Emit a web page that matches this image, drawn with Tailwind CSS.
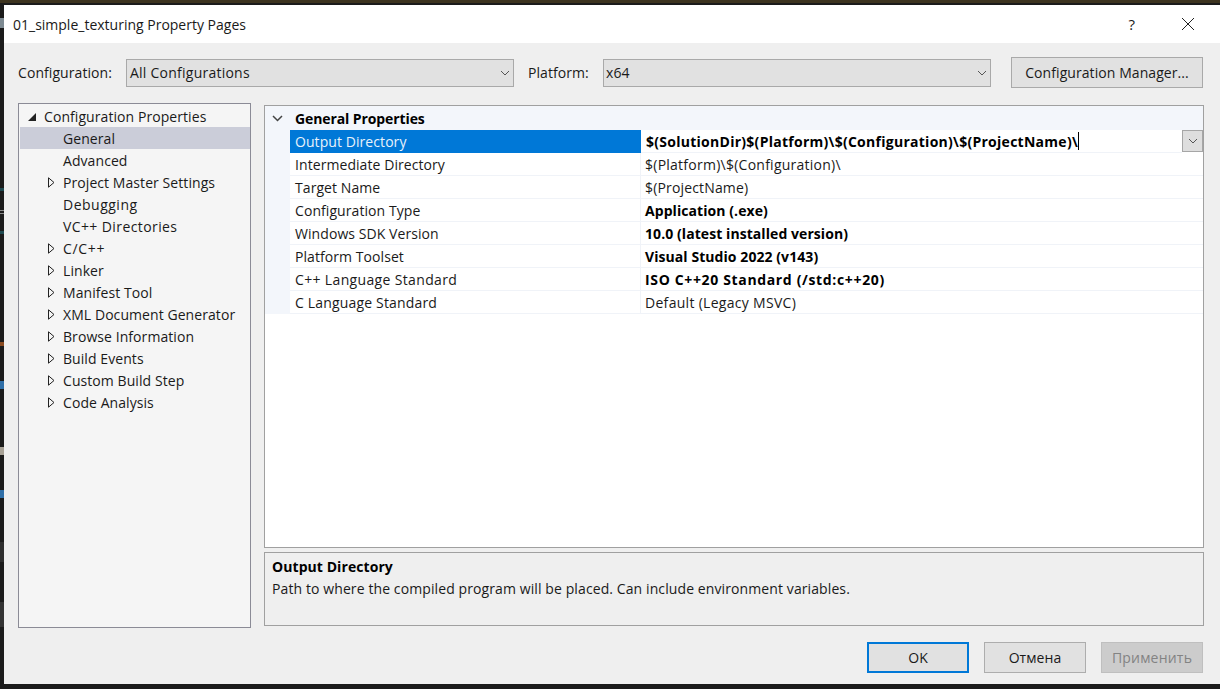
<!DOCTYPE html>
<html lang="en">
  <head>
    <meta charset="UTF-8" />
    <script src="https://cdn.jsdelivr.net/npm/@tailwindcss/browser@4"></script>
    <title>01_simple_texturing Property Pages</title>
  </head>
  <body class="relative h-[689px] w-[1220px] overflow-hidden bg-[#1b1b1b] font-['Open_Sans',sans-serif] text-[14px] tracking-[0.07px] text-[#1a1a1a]">
    <div class="h-[3px] bg-[#3d3420]"></div>

    <!-- bits of the editor behind the dialog -->
    <div class="absolute left-0 top-[18px] h-[10px] w-1 bg-[#7d8a92]"></div>
    <div class="absolute left-0 top-[188px] h-[3px] w-1 bg-[#1f4a50]"></div>
    <div class="absolute left-0 top-[210px] h-px w-1 bg-[#8a8a8a]"></div>
    <div class="absolute left-0 top-[213px] h-px w-1 bg-[#8a8a8a]"></div>
    <div class="absolute left-0 top-[231px] h-[3px] w-1 bg-[#1f4a50]"></div>
    <div class="absolute left-0 top-[342px] h-[4px] w-1 bg-[#8a4a20]"></div>
    <div class="absolute left-0 top-[381px] h-[8px] w-1 bg-[#2f6fa8]"></div>
    <div class="absolute left-0 top-[447px] h-[8px] w-1 bg-[#a8a296]"></div>
    <div class="absolute left-0 top-[490px] h-[8px] w-1 bg-[#2f6fa8]"></div>
    <div class="absolute left-0 top-[542px] h-[20px] w-1 bg-[#2e2e2e]"></div>
    <div class="absolute left-0 top-[602px] h-[25px] w-1 bg-[#333333]"></div>

    <div class="ml-1 mt-0.5 flex h-[679px] w-[1216px] flex-col bg-[#efefef]">
      <!-- title bar -->
      <div class="flex h-[38px] shrink-0 items-center bg-white pl-[9px]">
        <span class="flex-1 tracking-normal">01_simple_texturing Property Pages</span>
        <span class="mr-[46px] text-[15px]">?</span>
        <svg class="mr-[25px] size-[14px]" viewBox="0 0 14 14" fill="none" stroke="#222" stroke-width="1">
          <path d="M1 1l12 12M13 1L1 13" />
        </svg>
      </div>

      <!-- configuration row -->
      <div class="mt-[14px] flex h-[31px] shrink-0 items-center pl-[14px]">
        <span class="w-[108px]">Configuration:</span>
        <div class="flex h-[28px] w-[388px] items-center justify-between border border-[#a9a9a9] bg-[#e1e1e1] pl-[3px] pr-[3px] tracking-[0.24px]">
          All Configurations
          <svg class="size-[10px]" viewBox="0 0 10 10" fill="none" stroke="#555"><path d="M1 3l4 4 4-4" /></svg>
        </div>
        <span class="ml-[14px] w-[75px]">Platform:</span>
        <div class="flex h-[28px] w-[388px] items-center justify-between border border-[#a9a9a9] bg-[#e1e1e1] pl-[2px] pr-[3px]">
          x64
          <svg class="size-[10px]" viewBox="0 0 10 10" fill="none" stroke="#555"><path d="M1 3l4 4 4-4" /></svg>
        </div>
        <div class="ml-[20px] flex h-[31px] w-[192px] items-center justify-center border border-[#a9a9a9] bg-[#e1e1e1]">
          Configuration Manager...
        </div>
      </div>

      <div class="mt-[15px] flex flex-1 pl-[14px]">
        <!-- tree -->
        <div class="h-[525px] w-[233px] shrink-0 border border-[#8b8b96] bg-[#f5f5f5] pl-px pt-px">
          <div class="flex h-[22px] items-center">
            <svg class="ml-[8px] mr-[7px] size-[9px]" viewBox="0 0 9 9"><path d="M0 9h8V1z" fill="#222" /></svg>
            Configuration Properties
          </div>
          <div class="flex h-[22px] items-center bg-[#cbcdd9] pl-[43px]">General</div>
          <div class="flex h-[22px] items-center pl-[43px]">Advanced</div>
          <div class="flex h-[22px] items-center">
            <svg class="ml-[28px] mr-[8px] h-[11px] w-[7px]" viewBox="0 0 7 11" fill="none" stroke="#222"><path d="M.5.8v9.4L6 5.5z" /></svg>
            Project Master Settings
          </div>
          <div class="flex h-[22px] items-center pl-[43px] tracking-[0.5px]">Debugging</div>
          <div class="flex h-[22px] items-center pl-[43px] tracking-[0.4px]">VC++ Directories</div>
          <div class="flex h-[22px] items-center tracking-[0.7px]">
            <svg class="ml-[28px] mr-[8px] h-[11px] w-[7px]" viewBox="0 0 7 11" fill="none" stroke="#222"><path d="M.5.8v9.4L6 5.5z" /></svg>
            C/C++
          </div>
          <div class="flex h-[22px] items-center">
            <svg class="ml-[28px] mr-[8px] h-[11px] w-[7px]" viewBox="0 0 7 11" fill="none" stroke="#222"><path d="M.5.8v9.4L6 5.5z" /></svg>
            Linker
          </div>
          <div class="flex h-[22px] items-center">
            <svg class="ml-[28px] mr-[8px] h-[11px] w-[7px]" viewBox="0 0 7 11" fill="none" stroke="#222"><path d="M.5.8v9.4L6 5.5z" /></svg>
            Manifest Tool
          </div>
          <div class="flex h-[22px] items-center">
            <svg class="ml-[28px] mr-[8px] h-[11px] w-[7px]" viewBox="0 0 7 11" fill="none" stroke="#222"><path d="M.5.8v9.4L6 5.5z" /></svg>
            XML Document Generator
          </div>
          <div class="flex h-[22px] items-center">
            <svg class="ml-[28px] mr-[8px] h-[11px] w-[7px]" viewBox="0 0 7 11" fill="none" stroke="#222"><path d="M.5.8v9.4L6 5.5z" /></svg>
            Browse Information
          </div>
          <div class="flex h-[22px] items-center">
            <svg class="ml-[28px] mr-[8px] h-[11px] w-[7px]" viewBox="0 0 7 11" fill="none" stroke="#222"><path d="M.5.8v9.4L6 5.5z" /></svg>
            Build Events
          </div>
          <div class="flex h-[22px] items-center">
            <svg class="ml-[28px] mr-[8px] h-[11px] w-[7px]" viewBox="0 0 7 11" fill="none" stroke="#222"><path d="M.5.8v9.4L6 5.5z" /></svg>
            Custom Build Step
          </div>
          <div class="flex h-[22px] items-center">
            <svg class="ml-[28px] mr-[8px] h-[11px] w-[7px]" viewBox="0 0 7 11" fill="none" stroke="#222"><path d="M.5.8v9.4L6 5.5z" /></svg>
            Code Analysis
          </div>
        </div>

        <div class="ml-[13px] mt-0.5 flex w-[940px] flex-col">
          <!-- property grid -->
          <div class="h-[443px] border border-[#a0a0a0] bg-white">
            <div class="flex h-[24px] items-center bg-[#f3f6fb] font-bold tracking-[-0.1px] text-black">
              <svg class="ml-[7px] mr-[12px] size-[11px]" viewBox="0 0 11 11" fill="none" stroke="#444" stroke-width="1.5"><path d="M1 3l4.5 4.5L10 3" /></svg>
              General Properties
            </div>
            <div class="flex h-[23px]">
              <div class="w-[25px] bg-[#f3f6fb]"></div>
              <div class="flex w-[351px] items-center bg-[#0078d7] pl-[5px] text-[#e8f2fb]">Output Directory</div>
              <div class="flex flex-1 items-center border-b border-[#f0f3f8] pl-[5px] font-bold tracking-[0.27px] text-black">
                $(SolutionDir)$(Platform)\$(Configuration)\$(ProjectName)\<span class="h-[18px] w-px bg-black"></span>
              </div>
              <div class="flex h-[22px] w-[21px] items-center justify-center border border-[#a6a6a6] bg-[#dedede]">
                <svg class="size-[10px]" viewBox="0 0 10 10" fill="none" stroke="#555"><path d="M1 3l4 4 4-4" /></svg>
              </div>
            </div>
            <div class="flex h-[23px]">
              <div class="w-[25px] bg-[#f3f6fb]"></div>
              <div class="flex w-[351px] items-center border-b border-r border-[#f0f3f8] pl-[5px]">Intermediate Directory</div>
              <div class="flex flex-1 items-center border-b border-[#f0f3f8] pl-[4px] tracking-[0.25px]">$(Platform)\$(Configuration)\</div>
            </div>
            <div class="flex h-[23px]">
              <div class="w-[25px] bg-[#f3f6fb]"></div>
              <div class="flex w-[351px] items-center border-b border-r border-[#f0f3f8] pl-[5px]">Target Name</div>
              <div class="flex flex-1 items-center border-b border-[#f0f3f8] pl-[4px] tracking-[0.16px]">$(ProjectName)</div>
            </div>
            <div class="flex h-[23px]">
              <div class="w-[25px] bg-[#f3f6fb]"></div>
              <div class="flex w-[351px] items-center border-b border-r border-[#f0f3f8] pl-[5px]">Configuration Type</div>
              <div class="flex flex-1 items-center border-b border-[#f0f3f8] pl-[4px] font-bold text-black">Application (.exe)</div>
            </div>
            <div class="flex h-[23px]">
              <div class="w-[25px] bg-[#f3f6fb]"></div>
              <div class="flex w-[351px] items-center border-b border-r border-[#f0f3f8] pl-[5px]">Windows SDK Version</div>
              <div class="flex flex-1 items-center border-b border-[#f0f3f8] pl-[4px] font-bold text-black">10.0 (latest installed version)</div>
            </div>
            <div class="flex h-[23px]">
              <div class="w-[25px] bg-[#f3f6fb]"></div>
              <div class="flex w-[351px] items-center border-b border-r border-[#f0f3f8] pl-[5px]">Platform Toolset</div>
              <div class="flex flex-1 items-center border-b border-[#f0f3f8] pl-[4px] font-bold text-black">Visual Studio 2022 (v143)</div>
            </div>
            <div class="flex h-[23px]">
              <div class="w-[25px] bg-[#f3f6fb]"></div>
              <div class="flex w-[351px] items-center border-b border-r border-[#f0f3f8] pl-[5px] tracking-[0.35px]">C++ Language Standard</div>
              <div class="flex flex-1 items-center border-b border-[#f0f3f8] pl-[4px] font-bold tracking-[0.65px] text-black">ISO C++20 Standard (/std:c++20)</div>
            </div>
            <div class="flex h-[23px]">
              <div class="w-[25px] bg-[#f3f6fb]"></div>
              <div class="flex w-[351px] items-center border-b border-r border-[#f0f3f8] pl-[5px] tracking-[0.17px]">C Language Standard</div>
              <div class="flex flex-1 items-center border-b border-[#f0f3f8] pl-[4px] tracking-[0.3px]">Default (Legacy MSVC)</div>
            </div>
          </div>

          <!-- description -->
          <div class="mt-[4px] h-[74px] border border-[#a0a0a0] px-[7px] pt-[3px]">
            <div class="font-bold leading-[22px] text-black">Output Directory</div>
            <div class="leading-[22px] tracking-[0.1px]">Path to where the compiled program will be placed. Can include environment variables.</div>
          </div>
        </div>
      </div>

      <!-- buttons -->
      <div class="mb-[11px] flex justify-end gap-[15px] pr-[17px]">
        <div class="flex h-[31px] w-[102px] items-center justify-center border-2 border-[#0078d7] bg-[#e1e1e1]">OK</div>
        <div class="flex h-[31px] w-[102px] items-center justify-center border border-[#adadad] bg-[#e1e1e1]">Отмена</div>
        <div class="flex h-[31px] w-[102px] items-center justify-center border border-[#bfbfbf] bg-[#cccccc] tracking-[0.2px] text-[#838383]">Применить</div>
      </div>
    </div>
  </body>
</html>
